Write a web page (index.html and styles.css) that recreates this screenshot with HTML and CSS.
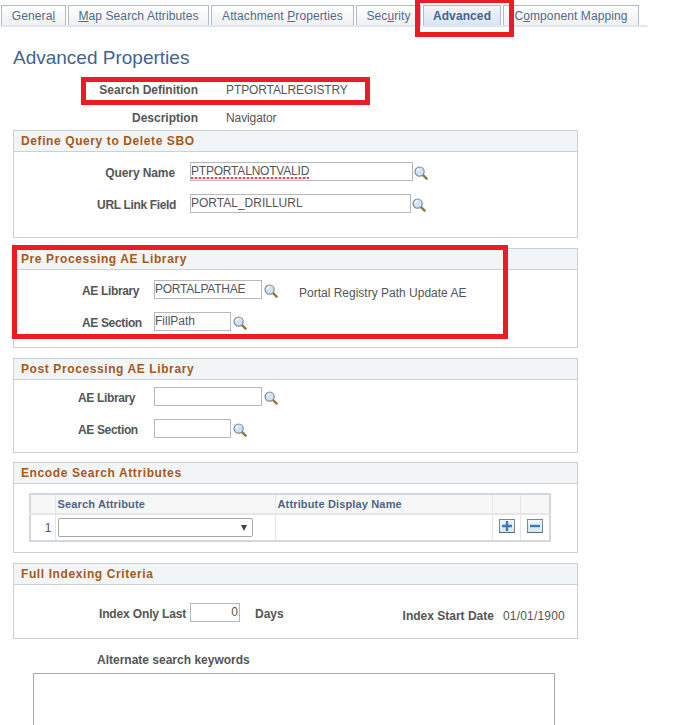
FILE: index.html
```html
<!DOCTYPE html>
<html lang="en">
<head>
<meta charset="utf-8">
<title>Advanced Properties</title>
<link rel="stylesheet" href="styles.css">
</head>
<body>
<svg class="defs" width="0" height="0" aria-hidden="true">
  <symbol id="lens" viewBox="0 0 14 14">
    <path d="M8.6 8.6 L12.6 12.6" stroke="#8a7a3a" stroke-width="2.4" stroke-linecap="round"/>
    <circle cx="5.6" cy="5.6" r="4.6" fill="#cfe3f7" stroke="#7f8b95" stroke-width="1.2"/>
    <path d="M3 5.2 A3 3 0 0 1 5.4 2.8" fill="none" stroke="#fff" stroke-width="1.2"/>
  </symbol>
</svg>
<div class="page">
  <nav class="tabs">
    <a class="tab">Genera<u>l</u></a>
    <a class="tab"><u>M</u>ap Search Attributes</a>
    <a class="tab">Attachment <u>P</u>roperties</a>
    <a class="tab">Sec<u>u</u>rity</a>
    <a class="tab active">Advanced</a>
    <a class="tab">C<u>o</u>mponent Mapping</a>
  </nav>

  <h1 class="title">Advanced Properties</h1>

  <dl class="summary">
    <div class="summary-row"><dt class="label">Search Definition</dt><dd class="value">PTPORTALREGISTRY</dd></div>
    <div class="summary-row"><dt class="label">Description</dt><dd class="value">Navigator</dd></div>
  </dl>

  <section class="box box-query">
    <h2 class="box-head">Define Query to Delete SBO</h2>
    <div class="box-body">
      <div class="field">
        <label class="label label-right label-query">Query Name</label>
        <span class="input-wrap">
          <input class="input input-query" value="PTPORTALNOTVALID">
          <span class="squiggle"></span>
        </span>
        <svg class="lens lens-near"><use href="#lens"/></svg>
      </div>
      <div class="field">
        <label class="label label-right label-url">URL Link Field</label>
        <input class="input input-url" value="PORTAL_DRILLURL">
        <svg class="lens lens-near"><use href="#lens"/></svg>
      </div>
    </div>
  </section>

  <section class="box box-pre">
    <h2 class="box-head">Pre Processing AE Library</h2>
    <div class="box-body">
      <div class="field">
        <label class="label label-ae">AE Library</label>
        <input class="input input-lib" value="PORTALPATHAE">
        <svg class="lens"><use href="#lens"/></svg>
        <span class="value note">Portal Registry Path Update AE</span>
      </div>
      <div class="field">
        <label class="label label-ae">AE Section</label>
        <input class="input input-sec" value="FillPath">
        <svg class="lens"><use href="#lens"/></svg>
      </div>
    </div>
  </section>

  <section class="box box-post">
    <h2 class="box-head">Post Processing AE Library</h2>
    <div class="box-body">
      <div class="field">
        <label class="label label-ae-post">AE Library</label>
        <input class="input input-lib">
        <svg class="lens"><use href="#lens"/></svg>
      </div>
      <div class="field">
        <label class="label label-ae-post">AE Section</label>
        <input class="input input-sec">
        <svg class="lens"><use href="#lens"/></svg>
      </div>
    </div>
  </section>

  <section class="box box-encode">
    <h2 class="box-head">Encode Search Attributes</h2>
    <div class="box-body">
      <table class="grid">
        <colgroup>
          <col class="col-num"><col class="col-attr"><col class="col-name"><col class="col-btn"><col class="col-btn2">
        </colgroup>
        <thead>
          <tr><th></th><th>Search Attribute</th><th>Attribute Display Name</th><th></th><th></th></tr>
        </thead>
        <tbody>
          <tr>
            <td class="num">1</td>
            <td><span class="select-wrap"><select class="select"><option></option></select></span></td>
            <td></td>
            <td class="btn-cell btn-add"><button class="icon-btn" type="button" aria-label="Add"><svg viewBox="0 0 10 10" width="10" height="10"><path d="M5 0V10M0 5H10" stroke="#3a78b8" stroke-width="2.4"/></svg></button></td>
            <td class="btn-cell"><button class="icon-btn" type="button" aria-label="Delete"><svg viewBox="0 0 10 10" width="10" height="10"><path d="M0 5H10" stroke="#3a78b8" stroke-width="2.4"/></svg></button></td>
          </tr>
        </tbody>
      </table>
    </div>
  </section>

  <section class="box box-full">
    <h2 class="box-head">Full Indexing Criteria</h2>
    <div class="box-body full-row">
      <label class="label label-days">Index Only Last</label>
      <input class="input input-days" value="0">
      <span class="label days">Days</span>
      <span class="label start-label">Index Start Date</span>
      <span class="value start-value">01/01/1900</span>
    </div>
  </section>

  <label class="label alt-label">Alternate search keywords</label>
  <textarea class="keywords"></textarea>

  <div class="mark mark-tab"></div>
  <div class="mark mark-def"></div>
  <div class="mark mark-pre"></div>
</div>
</body>
</html>
```
FILE: styles.css
```css
html, body { margin: 0; padding: 0; background: #fff; }
body { height: 725px; overflow: hidden; font: 12px/14px "Liberation Sans", Arial, sans-serif; color: #555; }
.defs { position: absolute; }
.page { position: relative; width: 683px; height: 725px; overflow: hidden; }

.tabs {
  display: grid;
  grid-template-columns: 65px 141px 143px 65px 78px 136px;
  column-gap: 2px;
  width: 646px;
  height: 20px;
  padding: 5px 0 0 1px;
  border-bottom: 2px solid #dce6f4;
}
.tab {
  display: block;
  box-sizing: border-box;
  height: 20px;
  border: 1px solid #aebbca;
  border-bottom: 0;
  background: linear-gradient(#fff, #f0f0f0);
  color: #4f6a8c;
  line-height: 21px;
  text-align: center;
  letter-spacing: .1px;
}
.tab.active {
  background: linear-gradient(#f3f6fc, #d8e4f4);
  font-weight: bold;
  color: #46648c;
}

.title {
  margin: 19px 0 0 13px;
  font-size: 19px;
  line-height: 24px;
  font-weight: normal;
  color: #3f6491;
}

.summary { margin: 13px 0 0; }
.summary-row { display: flex; height: 14px; margin: 0 0 14px; }
.summary-row:last-child { margin-bottom: 0; }
.summary .label { width: 198px; text-align: right; }
.summary .value { margin: 0 0 0 28px; letter-spacing: -.1px; }
.label { font-weight: bold; color: #555; }
.value { color: #555; }

.box {
  box-sizing: border-box;
  width: 565px;
  margin: 0 0 10px 13px;
  border: 1px solid #ccd0d5;
}
.box-head {
  box-sizing: border-box;
  height: 21px;
  margin: 0;
  padding: 0 0 0 7px;
  background: #f1f5f6;
  border-bottom: 1px solid #ccd0d5;
  color: #a9571c;
  font-size: 12px;
  line-height: 20px;
  font-weight: bold;
  letter-spacing: .6px;
}
.box-query { height: 108px; margin-top: 5px; }
.box-pre { height: 100px; }
.box-post { height: 95px; margin-bottom: 9px; }
.box-encode { height: 91px; }
.box-full { height: 76px; margin-bottom: 0; }

.box-body { padding: 10px 0 0; }
.box-post .box-body { padding-top: 7px; }
.box-encode .box-body { padding-top: 9px; }
.field { display: flex; align-items: center; height: 19px; margin-bottom: 13px; }
.field .label { margin-top: 2px; }

.label-right { width: 162px; text-align: right; margin-right: 14px; }
.label-query { width: 161px; margin-right: 15px; letter-spacing: -.1px; }
.label-url { letter-spacing: -.35px; }
.label-ae { width: 72px; margin-left: 68px; flex: none; letter-spacing: -.35px; }
.label-ae-post { width: 76px; margin-left: 64px; flex: none; letter-spacing: -.35px; }

.input {
  box-sizing: border-box;
  height: 19px;
  padding: 0 0 2px;
  border: 1px solid #b8b8b8;
  border-radius: 0;
  background: #fff;
  color: #555;
  font: 12px "Liberation Sans", Arial, sans-serif;
  outline: none;
}
.input-wrap { position: relative; display: block; height: 19px; }
.input-query { display: block; width: 223px; letter-spacing: -.2px; }
.input-url { width: 221px; }
.input-lib { width: 108px; letter-spacing: -.25px; }
.input-sec { width: 77px; }
.input-days { width: 50px; text-align: right; padding-right: 1px; margin-left: 4px; }
.squiggle {
  position: absolute;
  left: 1px;
  bottom: 2px;
  width: 118px;
  height: 2px;
  background: repeating-linear-gradient(90deg, #e0484f 0 2px, #f5c4c6 2px 4px);
}

.lens { width: 14px; height: 14px; margin: 3px 0 0 2px; flex: none; }
.lens-near { margin-left: 1px; }
.note { margin: 6px 0 0 21px; }

.grid {
  box-sizing: border-box;
  table-layout: fixed;
  width: 520px;
  margin: 0 0 0 15px;
  border-collapse: collapse;
  border: 2px solid #d3d7dc;
}
.col-num { width: 25px; }
.col-attr { width: 220px; }
.col-name { width: 217px; }
.col-btn { width: 28px; }
.col-btn2 { width: 30px; }
.grid th {
  height: 18px;
  padding: 0 0 0 2px;
  background: #f7f7f7;
  border: 1px solid #e6e6e6;
  border-bottom: 2px solid #e6e6e6;
  color: #4a6488;
  font-size: 11px;
  font-weight: bold;
  text-align: left;
  letter-spacing: .15px;
}
.grid td { height: 25px; padding: 0; border: 1px solid #e6e6e6; vertical-align: middle; }
.grid .num { text-align: right; padding-right: 3px; }
.select-wrap { position: relative; display: block; width: 195px; height: 19px; margin-left: 2px; }
.select-wrap::after {
  content: "";
  position: absolute;
  right: 6px;
  top: 7px;
  border: 3.5px solid transparent;
  border-top: 6px solid #444;
  border-bottom: 0;
}
.select {
  display: block;
  box-sizing: border-box;
  width: 195px;
  height: 19px;
  padding: 0;
  border: 1px solid #a8a8a8;
  border-radius: 2px;
  background: #fff;
  appearance: none;
  outline: none;
}
.grid .btn-cell { height: 22px; text-align: center; line-height: 0; padding-bottom: 3px; }
.grid .btn-add { padding-left: 2px; }
.icon-btn {
  display: inline-flex;
  align-items: center;
  justify-content: center;
  box-sizing: border-box;
  width: 16px;
  height: 14px;
  padding: 0;
  vertical-align: middle;
  border: 1px solid #6f8c99;
  border-bottom-color: #4f6d7a;
  background: linear-gradient(#f2f7f9, #d9e6ea);
}

.full-row { display: flex; align-items: center; height: 19px; padding: 18px 12px 0 85px; }
.label-days { width: 87px; flex: none; white-space: nowrap; letter-spacing: -.15px; margin-top: 2px; }
.days { margin: 2px 0 0 15px; }
.start-label { margin: 6px 0 0 auto; }
.start-value { margin: 6px 0 0 9px; letter-spacing: .2px; }

.alt-label { display: block; width: fit-content; margin: 14px 0 0 97px; }
.keywords {
  display: block;
  box-sizing: border-box;
  width: 522px;
  height: 120px;
  margin: 6px 0 0 33px;
  padding: 0;
  border: 1px solid #aaa;
  resize: none;
  outline: none;
}

.mark { position: absolute; box-sizing: border-box; border: 5px solid #ed1c24; }
.mark-tab { left: 415px; top: 0; width: 99px; height: 37px; border-top-width: 3px; }
.mark-def { left: 81px; top: 77px; width: 289px; height: 28px; }
.mark-pre { left: 12px; top: 245px; width: 496px; height: 94px; }
```
